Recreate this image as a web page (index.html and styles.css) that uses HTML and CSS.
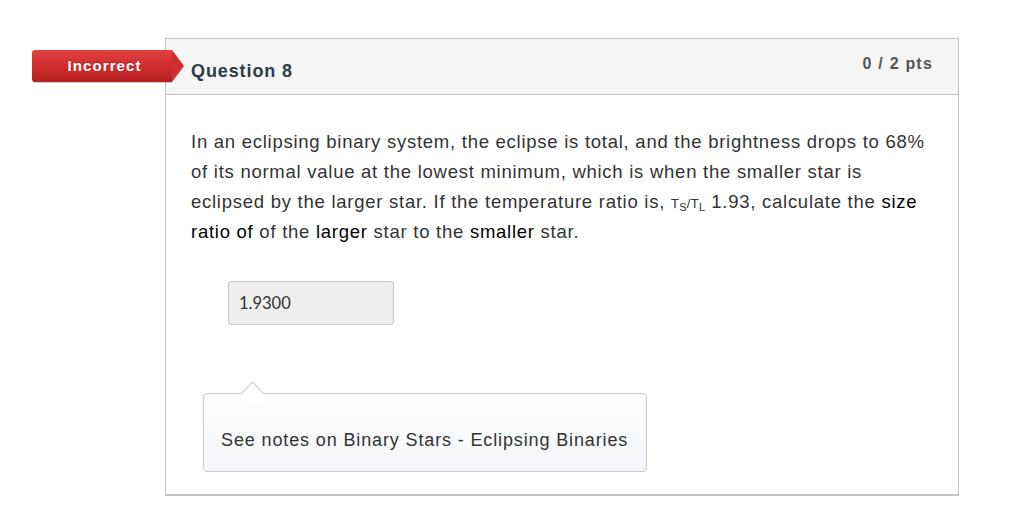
FILE: index.html
```html
<!DOCTYPE html>
<html>
<head>
<meta charset="utf-8">
<link rel="stylesheet" href="styles.css">
</head>
<body>
<div class="card">
  <div class="badge"><span class="badge-text">Incorrect</span></div>
  <div class="header">
    <div class="title">Question 8</div>
    <div class="pts">0 / 2 pts</div>
  </div>
  <div class="body">
    <p class="text">In an eclipsing binary system, the eclipse is total, and the brightness drops to 68% of its normal value at the lowest minimum, which is when the smaller star is eclipsed by the larger star. If the temperature ratio is, <span class="small">T<sub>S</sub>/T<sub>L</sub></span> 1.93, calculate the <span class="hl">size ratio of</span> of the <span class="hl">larger</span> star to the <span class="hl">smaller</span> star.</p>
    <div class="answer">1.9300</div>
    <div class="tip">See notes on Binary Stars - Eclipsing Binaries</div>
  </div>
</div>
</body>
</html>
```

FILE: styles.css
```css
html, body {
  margin: 0;
  padding: 0;
  background: #fff;
}
body {
  font-family: "Liberation Sans", Arial, sans-serif;
  color: #333;
  padding: 38px 0 0 165px;
}
.card {
  position: relative;
  width: 792px;
  border: 1px solid #c4c4c4;
  border-bottom-width: 2px;
}
.badge {
  position: absolute;
  left: -134px;
  top: 11px;
  width: 140px;
  height: 32px;
  background: linear-gradient(#e34141, #cc2a2a 60%, #b51f1f);
  border-radius: 3px 0 0 3px;
  box-shadow: 0 1px 1px rgba(0,0,0,0.2);
  display: flex;
  align-items: center;
  z-index: 2;
}
.badge::after {
  content: "";
  position: absolute;
  right: -12px;
  top: 0;
  border-top: 16px solid transparent;
  border-bottom: 16px solid transparent;
  border-left: 12px solid #cf2e2e;
}
.badge-text {
  color: #fff;
  font-weight: bold;
  font-size: 15px;
  letter-spacing: 1.1px;
  width: 140px;
  text-align: center;
  margin-left: 5px;
  margin-top: -2px;
  text-shadow: 0 -1px 0 rgba(0,0,0,0.25);
}
.header {
  background: #f5f5f5;
  border-bottom: 1px solid #c4c4c4;
  height: 56px;
  box-sizing: border-box;
  display: flex;
  justify-content: space-between;
  align-items: flex-start;
  padding: 0 25px 0 25px;
}
.title {
  font-weight: bold;
  font-size: 18px;
  letter-spacing: 0.9px;
  color: #2d3b45;
  margin-top: 21px;
  line-height: 22px;
}
.pts {
  font-weight: bold;
  font-size: 16px;
  letter-spacing: 1.2px;
  color: #555;
  margin-top: 15px;
  line-height: 20px;
}
.body {
  padding: 32px 25px 22px 25px;
}
.text {
  margin: 0;
  font-size: 18.5px;
  letter-spacing: 0.74px;
  line-height: 30px;
  color: #333;
  width: 742px;
}
.hl {
  color: #000;
}
.small {
  font-size: 13px;
  letter-spacing: 0.3px;
  line-height: 0;
}
.small sub {
  font-size: 11px;
  vertical-align: -3px;
  line-height: 0;
}
.answer {
  margin: 34px 0 0 37px;
  width: 166px;
  height: 44px;
  box-sizing: border-box;
  background: #eeeeee;
  border: 1px solid #c8c8c8;
  border-radius: 3px;
  font-family: Lato, "Liberation Sans", sans-serif;
  font-size: 16.5px;
  color: #333;
  padding: 0 10px;
  display: flex;
  align-items: center;
}
.tip {
  position: relative;
  margin: 68px 0 0 12px;
  width: 444px;
  height: 79px;
  box-sizing: border-box;
  border: 1px solid #c5cbd0;
  border-radius: 4px;
  background: linear-gradient(#ffffff, #f3f5f8);
  font-size: 18px;
  letter-spacing: 0.87px;
  color: #333;
  padding: 35px 0 0 17px;
  line-height: 22px;
}
.tip::before {
  content: "";
  position: absolute;
  left: 40px;
  top: -9px;
  width: 16px;
  height: 16px;
  background: #fff;
  border-left: 1px solid #c5cbd0;
  border-top: 1px solid #c5cbd0;
  transform: rotate(45deg);
  transform-origin: center;
}
```
